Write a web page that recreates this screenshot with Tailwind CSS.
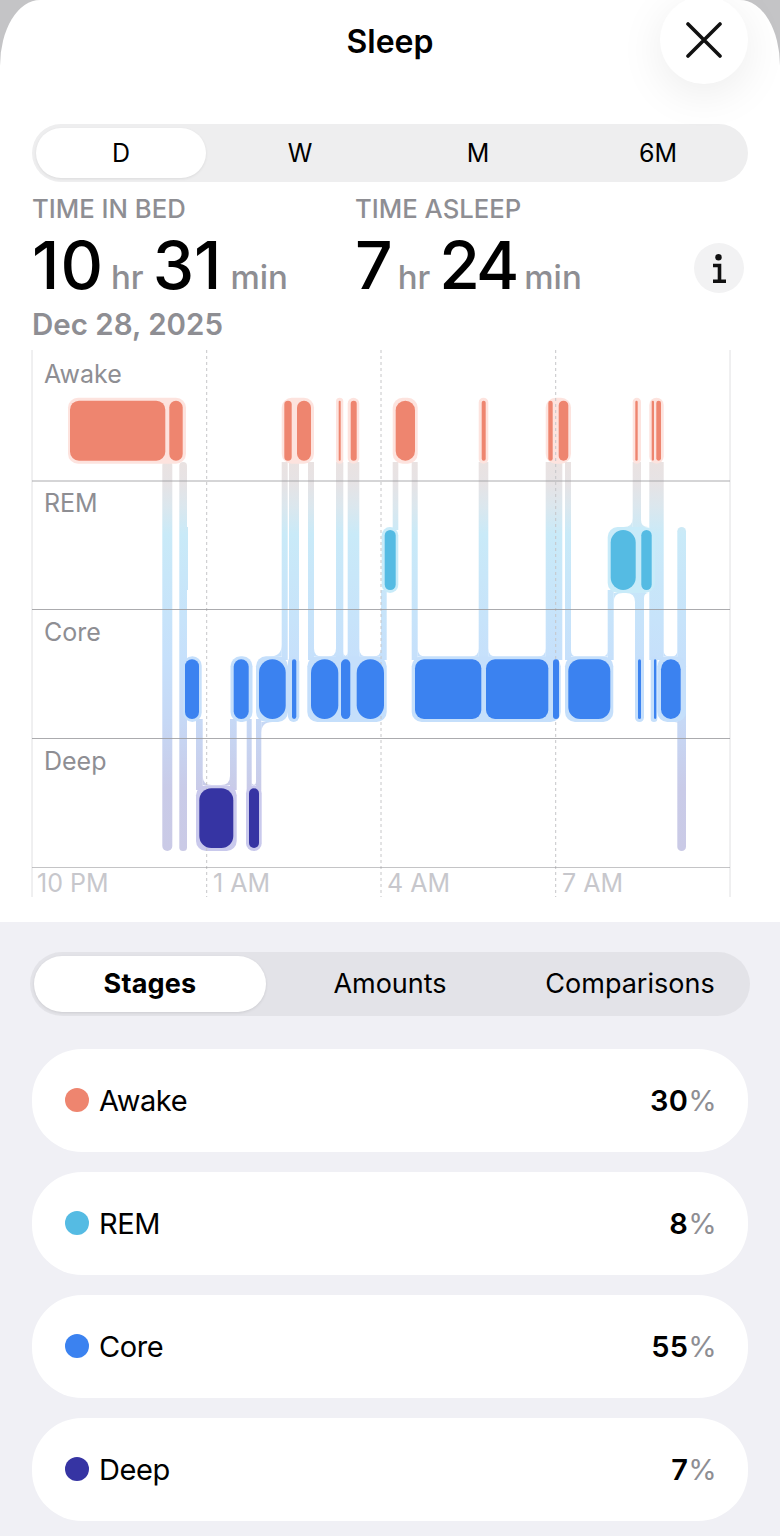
<!DOCTYPE html>
<html lang="en">
<head>
    <meta charset="UTF-8">
    <meta name="viewport" content="width=device-width, initial-scale=1.0">
    <title>Sleep</title>
    <script src="https://cdn.jsdelivr.net/npm/@tailwindcss/browser@4"></script>
</head>
<body class="bg-[#c4c4c6] font-[Inter,sans-serif] w-[780px] h-[1536px] overflow-hidden">
    <div class="bg-white rounded-tl-[40px_66px] rounded-tr-[40px_66px] h-[922px] relative">
        <!-- Header -->
        <div class="h-[124px] pt-[20px] text-center">
            <h1 class="text-[32px] leading-[44px] font-semibold text-black">Sleep</h1>
        </div>
        <button class="absolute right-[32px] top-[-4px] w-[88px] h-[88px] rounded-full bg-white shadow-[0_10px_45px_rgba(0,0,0,0.08)] flex items-center justify-center">
            <svg width="36" height="36" viewBox="0 0 36 36" fill="none" stroke="#111" stroke-width="3.6" stroke-linecap="round"><path d="M2 2 L34 34 M34 2 L2 34"/></svg>
        </button>

        <!-- Range selector -->
        <div class="mx-[32px] h-[58px] rounded-full bg-[#eeeeef] p-[4px] flex text-[25px] text-black">
            <div class="w-[170px] bg-white rounded-full flex items-center justify-center shadow-[0_1px_3px_rgba(0,0,0,0.08)] pt-[2px]">D</div>
            <div class="w-[188px] flex items-center justify-center pt-[2px]">W</div>
            <div class="w-[168px] flex items-center justify-center pt-[2px]">M</div>
            <div class="w-[182px] flex items-center justify-center pt-[2px] pl-[10px]">6M</div>
        </div>

        <!-- Totals -->
        <div class="relative mx-[32px] h-[168px] pt-[10px]">
            <div class="flex">
                <div class="w-[323px]">
                    <div class="text-[25.7px] leading-[34px] font-medium text-[#8e8e93]">TIME IN BED</div>
                    <div class="flex items-baseline h-[74px] leading-[78px]">
                        <span class="text-[66px] font-medium text-black tracking-[1px]">10</span><span class="text-[33px] font-medium text-[#8e8e93] ml-[7px] mr-[9px]">hr</span><span class="text-[66px] font-medium text-black">31</span><span class="text-[33px] font-medium text-[#8e8e93] ml-[9px]">min</span>
                    </div>
                </div>
                <div>
                    <div class="text-[25.7px] leading-[34px] font-medium text-[#8e8e93]">TIME ASLEEP</div>
                    <div class="flex items-baseline h-[74px] leading-[78px]">
                        <span class="text-[66px] font-medium text-black">7</span><span class="text-[33px] font-medium text-[#8e8e93] ml-[5px] mr-[9px]">hr</span><span class="text-[66px] font-medium text-black tracking-[-3px]">24</span><span class="text-[33px] font-medium text-[#8e8e93] ml-[8px]">min</span>
                    </div>
                </div>
            </div>
            <div class="text-[29.5px] leading-[38px] mt-[5px] font-semibold text-[#8e8e93]">Dec 28, 2025</div>
            <div class="absolute right-[4px] top-[61px] w-[50px] h-[50px] rounded-full bg-[#f2f2f3] flex items-center justify-center">
                <svg width="14" height="29" viewBox="0 0 14 29" fill="none" stroke="#111" stroke-width="3.6"><circle cx="6.5" cy="3.2" r="3.2" fill="#111" stroke="none"/><path d="M1 11.5 H7.5 V27 M1 27.2 H14"/></svg>
            </div>
        </div>

        <!-- Chart: blocks and connectors are placed by time and stage -->
        <div id="chart" class="absolute left-0 top-[350px] w-[780px] h-[548px]"></div>
    </div>

    <div class="bg-[#f0f0f5] h-[614px] pt-[30px]">
        <!-- Tabs -->
        <div class="mx-[30px] h-[64px] rounded-full bg-[#e3e3e8] p-[4px] flex text-[27px] text-black">
            <div class="w-[232px] bg-white rounded-full flex items-center justify-center font-bold shadow-[0_1px_3px_rgba(0,0,0,0.1)] tracking-[0.2px]">Stages</div>
            <div class="w-[248px] flex items-center justify-center">Amounts</div>
            <div class="w-[232px] flex items-center justify-center">Comparisons</div>
        </div>

        <!-- Legend rows -->
        <div class="mx-[32px] mt-[33px] flex flex-col gap-[20.5px]">
            <div class="h-[102.5px] rounded-[50px] bg-white flex items-center justify-between pl-[33px] pr-[31px] text-[29px] tracking-[-0.4px]">
                <div class="flex items-center gap-[10px]"><span class="w-[24px] h-[24px] rounded-full bg-[#ee856f]"></span><span class="text-black">Awake</span></div>
                <div class="tracking-[0.3px]"><span class="font-semibold text-black">30</span><span class="text-[#8e8e93]">%</span></div>
            </div>
            <div class="h-[102.5px] rounded-[50px] bg-white flex items-center justify-between pl-[33px] pr-[31px] text-[29px] tracking-[-0.4px]">
                <div class="flex items-center gap-[10px]"><span class="w-[24px] h-[24px] rounded-full bg-[#55bbe3]"></span><span class="text-black">REM</span></div>
                <div class="tracking-[0.3px]"><span class="font-semibold text-black">8</span><span class="text-[#8e8e93]">%</span></div>
            </div>
            <div class="h-[102.5px] rounded-[50px] bg-white flex items-center justify-between pl-[33px] pr-[31px] text-[29px] tracking-[-0.4px]">
                <div class="flex items-center gap-[10px]"><span class="w-[24px] h-[24px] rounded-full bg-[#3b82f0]"></span><span class="text-black">Core</span></div>
                <div class="tracking-[0.3px]"><span class="font-semibold text-black">55</span><span class="text-[#8e8e93]">%</span></div>
            </div>
            <div class="h-[102.5px] rounded-[50px] bg-white flex items-center justify-between pl-[33px] pr-[31px] text-[29px] tracking-[-0.4px]">
                <div class="flex items-center gap-[10px]"><span class="w-[24px] h-[24px] rounded-full bg-[#3634a3]"></span><span class="text-black">Deep</span></div>
                <div class="tracking-[0.3px]"><span class="font-semibold text-black">7</span><span class="text-[#8e8e93]">%</span></div>
            </div>
        </div>
    </div>

    <script>
        // all chart numbers are page coordinates, the svg viewBox starts at y 350
        const AWAKE = [400.7, 460.7], REM = [530, 590], CORE = [659.3, 719], DEEP = [788.3, 848];
        const stages = [
            { y: AWAKE, color: '#ee856f', halo: '#fde3de',
              blocks: [[70,165.3],[169.3,182.7],[284.3,291.7],[297,311],[338.7,340.7],[350.7,356.7],[395.7,415],[481.7,485.7],[548.3,552.7],[558.7,568.3],[635.3,637.7],[651.7,654],[656.3,661]],
              halos: [[68,186],[281.7,314],[336,343.3],[347.7,359.3],[392.7,417.7],[478.7,488.3],[545.7,571],[632.7,641],[649.3,663.7]] },
            { y: REM, color: '#55bbe3', halo: '#c8ebf9',
              blocks: [[384.7,395.7],[610.7,635.7],[641.3,651.7]],
              halos: [[381.7,398.3],[607.7,655]] },
            { y: CORE, color: '#3b82f0', halo: '#c5dffb',
              blocks: [[185,199],[233.7,248.7],[259,285.7],[292,296.3],[311,338.3],[341,350.3],[356.7,384],[415,481.3],[486,548.3],[553,559],[568.3,610.3],[638,641],[654,656.3],[661,680.7]],
              halos: [[183,201.7],[230.5,252.5],[256,288],[288,299.3],[307.3,386.7],[411.7,560.7],[565,613.3],[635,644],[650.7,657.3],[657.3,686]] },
            { y: DEEP, color: '#3634a3', halo: '#c9c9ec',
              blocks: [[199.3,233.3],[249,259]],
              halos: [[196,236.7],[246,261.7]] },
        ];
        // connector columns: [left, right, top, bottom]
        const columns = [
            [162.3,172.3,460,851],[179.3,187,462,851],[187,188,527,590],
            [196,202.7,719,790],[230,236.7,719,790],[246.7,251.7,719,790],[256,261.3,719,790],
            [281.7,287.7,462,660],[289,299,462,660],[308,314,462,660],[336,343.3,462,660],[347.7,359.3,462,660],
            [381,386.7,590,660],[392.7,398.3,462,530],[411.7,417.7,462,660],[478.7,488.3,462,660],
            [545.7,562.3,462,660],[565,571,462,660],[632.7,641,462,530],[649.3,663.7,462,660],
            [607.7,613.7,590,660],[635,644,590,660],[677.3,686,527,851],
        ];
        // concave corners where a column meets a block halo: [x, y, dirX, dirY, radius]
        const flares = [
            [632.7,527,-1,-1,9],[641,527,1,-1,7],
            [613.7,593,1,1,9],[635,593,-1,1,9],[644,593,1,1,5],
            [202.7,785,1,-1,9],[230,785,-1,-1,9],[251.7,785,1,-1,3],[256,785,-1,-1,3],
            [261.3,722,1,1,11],
            [281.7,656.5,-1,-1,12],[314,656.5,1,-1,8],[336,656.5,-1,-1,8],[343.3,656.5,1,-1,5],
            [347.7,656.5,-1,-1,5],[359.3,656.5,1,-1,8],[381,656.5,-1,-1,8],
            [417.7,656.5,1,-1,8],[478.7,656.5,-1,-1,8],[488.3,656.5,1,-1,8],[545.7,656.5,-1,-1,8],
            [571,656.5,1,-1,6],[607.7,656.5,-1,-1,6],[663.7,656.5,1,-1,6],[677.3,656.5,-1,-1,6],
            [680.7,722,-1,1,6],
        ];
        const rr = (x, y, w, h, r, fill) => `<rect x="${x}" y="${y}" width="${w}" height="${h}" rx="${Math.min(r, w / 2)}" fill="${fill}"/>`;

        let s = `<svg xmlns="http://www.w3.org/2000/svg" width="780" height="548" viewBox="0 350 780 548" font-family="Inter, sans-serif">
            <defs><linearGradient id="col" gradientUnits="userSpaceOnUse" x1="0" y1="460" x2="0" y2="851">
                <stop offset="0" stop-color="#eae2e1"/><stop offset="0.06" stop-color="#e6e3e5"/>
                <stop offset="0.12" stop-color="#dbe7ee"/><stop offset="0.19" stop-color="#c9eaf8"/>
                <stop offset="0.51" stop-color="#c6e0fb"/>
                <stop offset="0.67" stop-color="#c6d8f5"/><stop offset="0.84" stop-color="#c9cbe8"/>
                <stop offset="1" stop-color="#cacae6"/></linearGradient></defs>`;

        // side rules
        [32, 730].forEach(x => s += `<line x1="${x}" y1="350" x2="${x}" y2="897" stroke="#e0e0e2" stroke-width="1"/>`);

        // connectors sit under the blocks
        columns.forEach(c => {
            const rounded = c[3] > 850;
            s += rr(c[0], c[2], c[1] - c[0], c[3] - c[2], rounded ? 5 : 0, 'url(#col)');
        });
        flares.forEach(([x, y, dx, dy, r]) => {
            s += `<path d="M${x} ${y} L${x + dx * r} ${y} Q${x} ${y} ${x} ${y + dy * r} Z" fill="url(#col)"/>`;
        });

        // halos, then guides, then the solid blocks
        stages.forEach(st => {
            const top = st.y[0] - 3, h = st.y[1] - st.y[0] + 6;
            st.halos.forEach(b => s += rr(b[0], top, b[1] - b[0], h, 10, st.halo));
        });
        [206.7, 381, 555.7].forEach(x => s += `<line x1="${x}" y1="350" x2="${x}" y2="897" stroke="#c6c6c8" stroke-width="1" stroke-dasharray="3 3"/>`);
        [481, 609.5, 738.5, 867.5].forEach(y => s += `<line x1="32" y1="${y}" x2="730" y2="${y}" stroke="#9c9ca0" stroke-opacity="${y > 860 ? 0.6 : 0.85}" stroke-width="1"/>`);
        stages.forEach(st => {
            st.blocks.forEach(b => {
                const w = b[1] - b[0];
                s += rr(b[0], st.y[0], w, st.y[1] - st.y[0], w > 50 ? 9 : w > 30 ? 12 : 14, st.color);
            });
        });

        // labels
        [['Awake', 383], ['REM', 512], ['Core', 641], ['Deep', 770]].forEach(([t, y]) =>
            s += `<text x="44" y="${y}" font-size="25" fill="#8e8e93">${t}</text>`);
        [['10 PM', 37], ['1 AM', 213], ['4 AM', 387], ['7 AM', 562]].forEach(([t, x]) =>
            s += `<text x="${x}" y="892" font-size="25" fill="#c7c7cc">${t}</text>`);

        document.getElementById('chart').innerHTML = s + '</svg>';
    </script>
</body>
</html>
